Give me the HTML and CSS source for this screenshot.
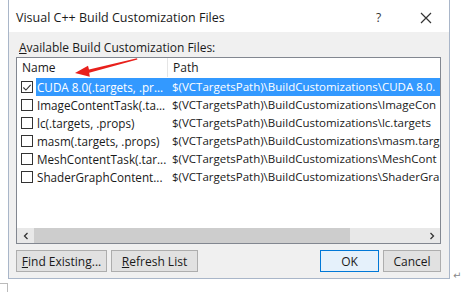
FILE: index.html
```html
<!DOCTYPE html>
<html>
<head>
<meta charset="utf-8">
<link rel="stylesheet" href="styles.css">
</head>
<body>
<div class="dialog">
  <div class="titlebar">
    <span class="title">Visual C++ Build Customization Files</span>
    <span class="help">?</span>
    <span class="close"><svg width="12" height="12" viewBox="0 0 12 12"><path d="M1 1L11 11M11 1L1 11" stroke="#333" stroke-width="1.2" fill="none"/></svg></span>
  </div>
  <div class="content">
    <div class="label"><u>A</u>vailable Build Customization Files:</div>
    <div class="listbox">
      <div class="header">
        <div class="col-name">Name</div>
        <div class="col-path">Path</div>
      </div>
      <div class="rows">
        <div class="row selected">
          <span class="cb checked"><svg width="11" height="11" viewBox="0 0 11 11"><path d="M1.5 5.5L4.3 8.3L9.5 2.5" stroke="#333" stroke-width="1.2" fill="none"/></svg></span>
          <span class="name">CUDA 8.0(.targets, .pr...</span>
          <span class="path">$(VCTargetsPath)\BuildCustomizations\CUDA 8.0.</span>
        </div>
        <div class="row">
          <span class="cb"></span>
          <span class="name">ImageContentTask(.ta...</span>
          <span class="path">$(VCTargetsPath)\BuildCustomizations\ImageCon</span>
        </div>
        <div class="row">
          <span class="cb"></span>
          <span class="name">lc(.targets, .props)</span>
          <span class="path">$(VCTargetsPath)\BuildCustomizations\lc.targets</span>
        </div>
        <div class="row">
          <span class="cb"></span>
          <span class="name">masm(.targets, .props)</span>
          <span class="path">$(VCTargetsPath)\BuildCustomizations\masm.targ</span>
        </div>
        <div class="row">
          <span class="cb"></span>
          <span class="name">MeshContentTask(.tar...</span>
          <span class="path">$(VCTargetsPath)\BuildCustomizations\MeshCont</span>
        </div>
        <div class="row">
          <span class="cb"></span>
          <span class="name">ShaderGraphContent...</span>
          <span class="path">$(VCTargetsPath)\BuildCustomizations\ShaderGra</span>
        </div>
      </div>
      <div class="hscroll">
        <span class="arrow"><svg width="6" height="8" viewBox="0 0 6 8"><path d="M4.5 1L1.5 4L4.5 7" stroke="#333" stroke-width="1.3" fill="none"/></svg></span>
        <span class="thumb"></span>
        <span class="track"></span>
        <span class="arrow"><svg width="6" height="8" viewBox="0 0 6 8"><path d="M1.5 1L4.5 4L1.5 7" stroke="#333" stroke-width="1.3" fill="none"/></svg></span>
      </div>
    </div>
    <div class="buttons">
      <button class="btn find"><u>F</u>ind Existing...</button>
      <button class="btn refresh"><u>R</u>efresh List</button>
      <span class="spacer"></span>
      <button class="btn ok">OK</button>
      <button class="btn cancel">Cancel</button>
    </div>
  </div>
</div>
<svg class="redarrow" width="70" height="24" viewBox="0 0 70 24">
  <path d="M66 1.2 L18 12.4 L17 8.8 L4 16 L18.8 19.8 L18.2 15.8 L66.4 2.6 Z" fill="#e8201c"/>
</svg>
<span class="para">↵</span>
<span class="corner"></span>
</body>
</html>
```
FILE: styles.css
```css
html, body {
  margin: 0;
  padding: 0;
  background: #ffffff;
}
body {
  font-family: "Open Sans", "Noto Sans", sans-serif;
  font-size: 12px;
  color: #000;
  width: 474px;
  height: 292px;
  overflow: hidden;
  position: relative;
}
.dialog {
  margin-left: 8px;
  width: 440px;
  height: 278px;
  border-left: 1px solid #a9b6c9;
  border-right: 1px solid #a9b6c9;
  border-bottom: 1px solid #a9b6c9;
  display: flex;
  flex-direction: column;
}
.titlebar {
  height: 32px;
  background: #ffffff;
  display: flex;
  align-items: center;
  padding-left: 7px;
  box-sizing: border-box;
}
.title {
  font-size: 12.5px;
  color: #1a1a1a;
  flex: 1;
  margin-top: 2px;
}
.help {
  font-size: 12px;
  color: #333;
  width: 12px;
  margin-right: 32px;
  margin-top: 3px;
}
.close {
  width: 12px;
  height: 12px;
  margin-right: 17px;
  margin-top: 3px;
  display: flex;
}
.content {
  flex: 1;
  background: #f0f0f0;
  padding: 0 8px 0 7px;
  display: flex;
  flex-direction: column;
}
.label {
  height: 25px;
  line-height: 16px;
  padding-top: 8px;
  padding-left: 3px;
  box-sizing: border-box;
  color: #1a1a1a;
}
.listbox {
  height: 187px;
  border: 1px solid #828790;
  background: #ffffff;
  box-sizing: border-box;
  display: flex;
  flex-direction: column;
  overflow: hidden;
}
.header {
  height: 19px;
  display: flex;
  align-items: center;
  flex-shrink: 0;
}
.col-name {
  width: 145px;
  padding-left: 5px;
  border-right: 1px solid #e5e5e5;
  height: 19px;
  line-height: 19px;
  color: #1a1a1a;
}
.col-path {
  padding-left: 5px;
  line-height: 19px;
  color: #1a1a1a;
}
.rows {
  flex: 1;
  padding-top: 1px;
}
.row {
  height: 18px;
  display: flex;
  align-items: center;
  white-space: nowrap;
  overflow: hidden;
  color: #1a1a1a;
  font-size: 11.7px;
}
.cb {
  width: 12px;
  height: 12px;
  border: 1px solid #333;
  background: #fff;
  box-sizing: border-box;
  margin-left: 4px;
  margin-right: 3px;
  flex-shrink: 0;
  display: flex;
  align-items: center;
  justify-content: center;
}
.cb.checked svg {
  display: block;
}
.name {
  width: 135px;
  flex-shrink: 0;
  padding-left: 1px;
  height: 18px;
  line-height: 18px;
}
.path {
  padding-left: 0;
  height: 18px;
  line-height: 18px;
  font-size: 11.5px;
}
.row.selected .name,
.row.selected .path {
  background: #3399ff;
  color: #ffffff;
}
.row.selected .path {
  flex: 1;
}
.hscroll {
  height: 15px;
  display: flex;
  align-items: center;
  background: #e8e8e8;
  flex-shrink: 0;
}
.hscroll .arrow {
  width: 17px;
  height: 15px;
  display: flex;
  align-items: center;
  justify-content: center;
  flex-shrink: 0;
}
.thumb {
  width: 316px;
  height: 15px;
  background: #cdcdcd;
}
.track {
  flex: 1;
}
.buttons {
  display: flex;
  margin-top: 6px;
  height: 22px;
}
.btn {
  font-family: "Open Sans", "Noto Sans", sans-serif;
  font-size: 12px;
  height: 22px;
  margin: 0;
  padding: 0;
  border: 1px solid #adadad;
  background: #e1e1e1;
  color: #1a1a1a;
}
.find {
  width: 91px;
}
.refresh {
  width: 87px;
  margin-left: 4px;
}
.spacer {
  flex: 1;
}
.ok {
  width: 59px;
  border-color: #0078d7;
  background: #e5f1fb;
}
.cancel {
  width: 58px;
  margin-left: 4px;
}
.redarrow {
  position: absolute;
  left: 71px;
  top: 57px;
}
.para {
  position: absolute;
  left: 453px;
  top: 270px;
  font-size: 10px;
  color: #888;
  font-family: "DejaVu Sans", sans-serif;
}
.corner {
  position: absolute;
  left: 0;
  top: 283px;
  width: 7px;
  height: 10px;
  border-top: 1px solid #bbb;
  border-right: 1px solid #bbb;
}
```
